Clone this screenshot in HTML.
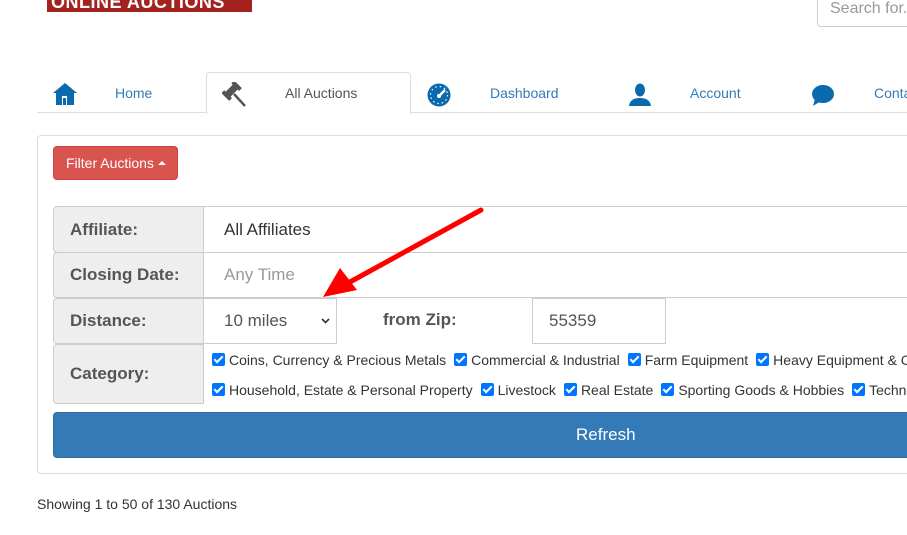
<!DOCTYPE html>
<html><head><style>
*{box-sizing:border-box}
html,body{margin:0;width:907px;height:535px;overflow:hidden}
body{background:#fff;font-family:"Liberation Sans",Arial,sans-serif;position:relative;color:#333}
.a{position:absolute}
.lbl{position:absolute;left:53px;width:151px;background:#eee;border:1px solid #ccc;border-radius:4px 0 0 4px;font-weight:bold;font-size:17px;color:#555;padding-left:16px;display:flex;align-items:center}
.inp{position:absolute;border:1px solid #ccc;background:#fff;font-size:17px;color:#555;display:flex;align-items:center;padding-left:20px}
.tab{position:absolute;top:85px;font-size:14px;color:#337ab7}
.cb{display:inline-block;width:13px;height:13px;background:#0075ff;border-radius:2px;vertical-align:-1px;margin-right:4px;position:relative}
.cb:after{content:"";position:absolute;left:4px;top:1px;width:3px;height:7px;border:solid #fff;border-width:0 2px 2px 0;transform:rotate(45deg)}
.cat{position:absolute;left:212px;font-size:14px;color:#333;white-space:nowrap}
.cat span{margin-right:8px}
</style></head><body>
<div class="a" style="left:47px;top:-8px;width:205px;height:20px;background:#a3221f;color:#fff;font-size:18px;font-weight:bold;letter-spacing:0.5px;line-height:20px;padding-left:4px;white-space:nowrap;overflow:hidden">ONLINE AUCTIONS</div>
<div class="a" style="left:817px;top:-10px;width:100px;height:37px;border:1px solid #ccc;border-radius:4px;font-size:16px;color:#999;padding:9px 0 0 12px;white-space:nowrap;overflow:hidden">Search for...</div>

<div class="a" style="left:37px;top:112px;width:870px;height:1px;background:#ddd"></div>
<div class="a" style="left:206px;top:72px;width:205px;height:42px;border:1px solid #ddd;border-bottom:none;border-radius:4px 4px 0 0;background:#fff"></div>
<svg class="a" style="left:53px;top:83px" width="24" height="22" viewBox="0 0 24 22"><path d="M12 0L0 10h3v12h18V10h3z" fill="#0a6aad"/><rect x="9" y="13" width="5" height="9" fill="#fff"/><rect x="10" y="15" width="3" height="7" fill="#0a6aad"/></svg>
<div class="tab" style="left:115px">Home</div>
<svg class="a" style="left:222px;top:82px" width="26" height="26" viewBox="0 0 26 26"><g transform="rotate(-45 10 9)"><rect x="3" y="5" width="14" height="7" fill="#555"/><rect x="1" y="3" width="4" height="11" fill="#555"/><rect x="15" y="3" width="4" height="11" fill="#555"/></g><line x1="12" y1="12" x2="23" y2="24" stroke="#555" stroke-width="2.5"/></svg>
<div class="tab" style="left:285px;color:#555">All Auctions</div>
<svg class="a" style="left:427px;top:83px" width="24" height="24" viewBox="0 0 24 24"><circle cx="12" cy="12" r="11.5" fill="#0a6aad"/><circle cx="12" cy="12" r="8.5" fill="none" stroke="#fff" stroke-width="1.2" stroke-dasharray="1.5 3"/><path d="M12 13L18 7" stroke="#fff" stroke-width="2.5"/><circle cx="12" cy="13" r="2" fill="#fff"/></svg>
<div class="tab" style="left:490px">Dashboard</div>
<svg class="a" style="left:629px;top:83px" width="22" height="23" viewBox="0 0 22 23"><ellipse cx="11" cy="7" rx="5" ry="6.5" fill="#0a6aad"/><path d="M0 23c1-6 5-8 11-8s10 2 11 8z" fill="#0a6aad"/></svg>
<div class="tab" style="left:690px">Account</div>
<svg class="a" style="left:811px;top:84px" width="24" height="23" viewBox="0 0 24 23"><ellipse cx="12" cy="10" rx="11" ry="9" fill="#0a6aad"/><path d="M4 15L2 22 10 17z" fill="#0a6aad"/></svg>
<div class="tab" style="left:874px">Conta</div>

<div class="a" style="left:37px;top:135px;width:880px;height:339px;border:1px solid #ddd;border-radius:4px"></div>
<div class="a" style="left:53px;top:146px;width:125px;height:34px;background:#d9534f;border:1px solid #d43f3a;border-radius:4px;color:#fff;font-size:14px;padding:8px 0 0 12px;white-space:nowrap">Filter Auctions <span style="display:inline-block;width:0;height:0;border-left:4px solid transparent;border-right:4px solid transparent;border-bottom:4px solid #fff;vertical-align:3px"></span></div>

<div class="lbl" style="top:206px;height:47px">Affiliate:</div>
<div class="inp" style="left:203px;top:206px;width:720px;height:47px;color:#333">All Affiliates</div>
<div class="lbl" style="top:252px;height:46px">Closing Date:</div>
<div class="inp" style="left:203px;top:252px;width:720px;height:46px;color:#999">Any Time</div>
<div class="lbl" style="top:298px;height:46px">Distance:</div>
<div class="inp" style="left:203px;top:298px;width:134px;height:46px">10 miles<svg style="position:absolute;right:6px;top:19px" width="9" height="6" viewBox="0 0 9 6"><path d="M1 1l3.5 3.5L8 1" fill="none" stroke="#333" stroke-width="1.6"/></svg></div>
<div class="a" style="left:383px;top:310px;font-weight:bold;font-size:17px;color:#555">from Zip:</div>
<div class="inp" style="left:532px;top:298px;width:134px;height:46px;padding-left:16px">55359</div>
<div class="lbl" style="top:344px;height:60px">Category:</div>
<div class="cat" style="top:352px"><span><i class="cb"></i>Coins, Currency &amp; Precious Metals</span><span><i class="cb"></i>Commercial &amp; Industrial</span><span><i class="cb"></i>Farm Equipment</span><span><i class="cb"></i>Heavy Equipment &amp; Construction</span></div>
<div class="cat" style="top:382px"><span><i class="cb"></i>Household, Estate &amp; Personal Property</span><span><i class="cb"></i>Livestock</span><span><i class="cb"></i>Real Estate</span><span><i class="cb"></i>Sporting Goods &amp; Hobbies</span><span><i class="cb"></i>Technology</span></div>
<div class="a" style="left:53px;top:412px;width:854px;height:46px;background:#337ab7;border:1px solid #2e6da4;border-right:none;border-radius:4px 0 0 4px;overflow:hidden"><div style="position:absolute;left:522px;top:0;line-height:44px;color:#fff;font-size:17px">Refresh</div></div>
<div class="a" style="left:37px;top:496px;font-size:14px;color:#333">Showing 1 to 50 of 130 Auctions</div>

<svg class="a" style="left:0;top:0" width="907" height="535"><line x1="481" y1="210" x2="350" y2="282" stroke="#f00" stroke-width="5" stroke-linecap="round"/><path d="M323 297L340 268 357 290z" fill="#f00"/></svg>
</body></html>
